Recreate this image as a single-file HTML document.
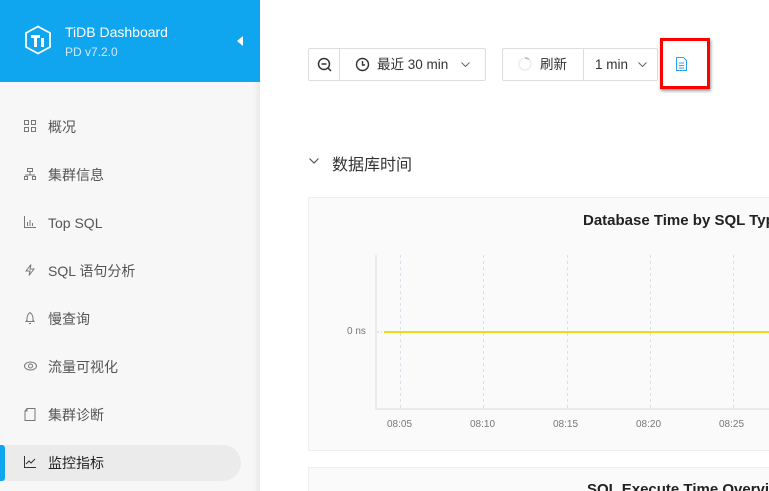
<!DOCTYPE html><html><head><meta charset="utf-8"><style>
*{margin:0;padding:0;box-sizing:border-box}
html,body{width:769px;height:491px;overflow:hidden}
body{background:#fff;font-family:"Liberation Sans","Noto Sans CJK SC",sans-serif;position:relative;color:#333}
.sb{position:absolute;left:0;top:0;width:260px;height:491px;background:#f7f7f7;box-shadow:inset -8px 0 8px -6px rgba(0,0,0,.08)}
.hd{position:absolute;left:0;top:0;width:260px;height:82px;background:#10a5ef}
.it{position:absolute;left:0;width:241px;height:36px;font-size:14px;color:#555;line-height:36px}
.it span{position:absolute;left:48px}
.it svg{position:absolute;left:24px;top:11px}
.bt{position:absolute;border:1px solid #ddd;background:#fff;height:33px;font-size:13.5px;line-height:31px;color:#333}
.ax{position:absolute;font-size:10px;color:#777}
.chev{position:absolute}
</style></head><body>
<div class="sb">
<div class="hd">
<svg style="position:absolute;left:24px;top:25px" width="28" height="30" viewBox="0 0 28 30"><polygon points="14,1.5 26,8 26,22 14,28.5 2,22 2,8" fill="none" stroke="#fff" stroke-width="1.8"/><path d="M7 10h9v3h-3v9h-3v-9H7z M17 13h3v9h-3z" fill="#fff"/></svg>
<div style="position:absolute;left:65px;top:24px;color:#fff;font-size:14px">TiDB Dashboard</div>
<div style="position:absolute;left:65px;top:45px;color:#cfe9fb;font-size:12px">PD v7.2.0</div>
<div style="position:absolute;left:237px;top:36px;width:0;height:0;border-top:5px solid transparent;border-bottom:5px solid transparent;border-right:6px solid #fff"></div>
</div>
<div class="it" style="top:109px"><svg width="12" height="12"><g fill="none" stroke="#777"><rect x=".5" y=".5" width="4" height="4"/><rect x="7.5" y=".5" width="4" height="4"/><rect x=".5" y="7.5" width="4" height="4"/><rect x="7.5" y="7.5" width="4" height="4"/></g></svg><span>概况</span></div>
<div class="it" style="top:157px"><svg width="12" height="12"><g fill="none" stroke="#777"><rect x="3.5" y=".5" width="5" height="3"/><path d="M6 4v3M1 7h10"/><rect x=".5" y="8.5" width="3" height="3"/><rect x="8.5" y="8.5" width="3" height="3"/></g></svg><span>集群信息</span></div>
<div class="it" style="top:205px"><svg width="12" height="12"><path d="M.5 0v11.5H12M3.5 10V6M6 10V4M8.5 10V7" stroke="#777" fill="none"/></svg><span>Top SQL</span></div>
<div class="it" style="top:253px"><svg width="12" height="12"><path d="M7 .5L2 7h4l-1 4.5L10 5H6z" stroke="#777" fill="none"/></svg><span>SQL 语句分析</span></div>
<div class="it" style="top:301px"><svg width="12" height="12"><path d="M6 .5c2 1.5 3 3.5 3 6v3H3v-3c0-2.5 1-4.5 3-6zM3 8L1.5 10M9 8l1.5 2M5 11.5h2" stroke="#777" fill="none"/></svg><span>慢查询</span></div>
<div class="it" style="top:349px"><svg width="13" height="12"><ellipse cx="6.5" cy="6" rx="6" ry="4" stroke="#777" fill="none"/><circle cx="6.5" cy="6" r="2" stroke="#777" fill="none"/></svg><span>流量可视化</span></div>
<div class="it" style="top:397px"><svg width="12" height="13"><path d="M3 .5h8v12H1V3zM3 .5V3H1" stroke="#777" fill="none"/></svg><span>集群诊断</span></div>
<div class="it" style="top:445px;background:#ebebeb;border-radius:0 18px 18px 0;color:#222"><div style="position:absolute;left:0;top:0;width:5px;height:36px;background:#10a5ef;border-radius:0 3px 3px 0"></div><svg width="12" height="12"><path d="M.5 0v11.5H12M2 8l3-3 2 2 4-4" stroke="#333" fill="none"/></svg><span>监控指标</span></div>
</div>
<div class="bt" style="left:308px;top:48px;width:32px;border-radius:2px 0 0 2px"><svg style="position:absolute;left:8px;top:8px" width="15" height="15"><circle cx="7" cy="7" r="5.5" stroke="#333" stroke-width="1.5" fill="none"/><path d="M4.5 7h5M11 11l3 3" stroke="#333" stroke-width="1.5"/></svg></div>
<div class="bt" style="left:339px;top:48px;width:147px;border-radius:0 2px 2px 0"><svg style="position:absolute;left:15px;top:8px" width="15" height="15"><circle cx="7.5" cy="7.5" r="6" stroke="#333" stroke-width="1.4" fill="none"/><path d="M7.5 4v4h2.5" stroke="#333" stroke-width="1.4" fill="none"/></svg><span style="position:absolute;left:37px">最近 30 min</span><svg class="chev" style="left:121px;top:13px" width="9" height="6"><path d="M.5.5l4 4 4-4" stroke="#666" fill="none"/></svg></div>
<div class="bt" style="left:502px;top:48px;width:82px;border-radius:2px 0 0 2px"><svg style="position:absolute;left:15px;top:8px" width="14" height="14"><circle cx="7" cy="7" r="6" stroke="#eee" stroke-width="1.5" fill="none"/><path d="M7 1a6 6 0 0 1 4 1.5" stroke="#bbb" stroke-width="1.5" fill="none"/></svg><span style="position:absolute;left:37px">刷新</span></div>
<div class="bt" style="left:583px;top:48px;width:75px;border-radius:0 2px 2px 0"><span style="position:absolute;left:11px">1 min</span><svg class="chev" style="left:54px;top:13px" width="9" height="6"><path d="M.5.5l4 4 4-4" stroke="#666" fill="none"/></svg></div>
<div style="position:absolute;left:660px;top:38px;width:50px;height:51px;border:3px solid #f00;box-shadow:1px 2px 3px rgba(0,0,0,.4)"></div>
<svg style="position:absolute;left:676px;top:57px" width="11" height="14"><path d="M.5.5h7l3 3v10H.5z" fill="none" stroke="#2aa4f4"/><path d="M3 6h5M3 8.5h5M3 11h5" stroke="#2aa4f4"/></svg>
<svg class="chev" style="left:309px;top:158px" width="10" height="6"><path d="M.5.5l4.5 4.5 4.5-4.5" stroke="#555" fill="none" stroke-width="1.2"/></svg>
<div style="position:absolute;left:332px;top:151px;font-size:16px;color:#333">数据库时间</div>
<div style="position:absolute;left:308px;top:197px;width:470px;height:254px;background:#fafafa;border:1px solid #eee"></div>
<div style="position:absolute;left:583px;top:212px;font-size:15px;font-weight:bold;color:#222;white-space:nowrap">Database Time by SQL Type</div>
<svg style="position:absolute;left:0;top:0" width="769" height="491">
<path d="M376 255V409H769" stroke="#e6e6e6" fill="none" stroke-width="1.5"/>
<g stroke="#dde" stroke-dasharray="3,3"><path d="M400.5 255V408M483.5 255V408M567.5 255V408M650.5 255V408M733.5 255V408"/></g>
<path d="M377 332h5" stroke="#ccd" stroke-dasharray="2,2"/>
<path d="M384 332H769" stroke="#f5d90a" stroke-width="2"/>
</svg>
<div class="ax" style="left:347px;top:326px">0 ns</div>
<div class="ax" style="left:387px;top:419px">08:05</div>
<div class="ax" style="left:470px;top:419px">08:10</div>
<div class="ax" style="left:553px;top:419px">08:15</div>
<div class="ax" style="left:636px;top:419px">08:20</div>
<div class="ax" style="left:719px;top:419px">08:25</div>
<div style="position:absolute;left:308px;top:467px;width:470px;height:40px;background:#fafafa;border:1px solid #eee"></div>
<div style="position:absolute;left:587px;top:481px;font-size:15px;font-weight:bold;color:#222;white-space:nowrap">SQL Execute Time Overview</div>
</body></html>
